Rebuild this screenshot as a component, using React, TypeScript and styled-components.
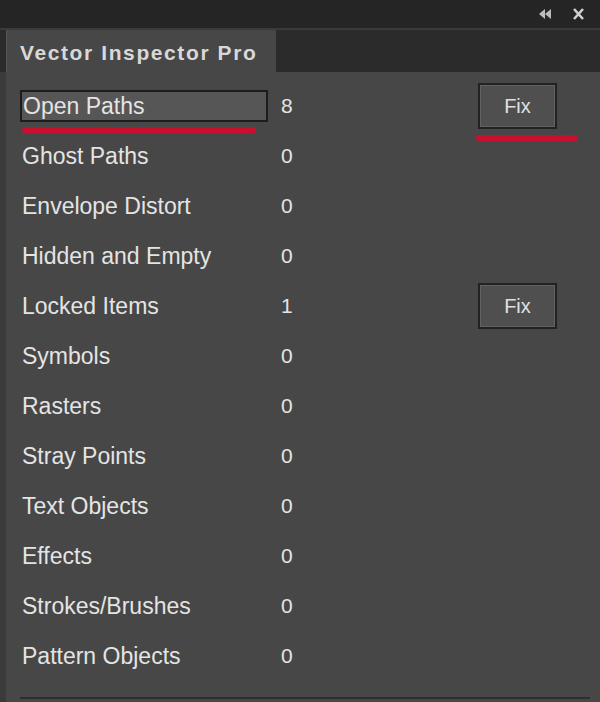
import React from "react";
import styled, { createGlobalStyle } from "styled-components";

const Global = createGlobalStyle`
  html, body { margin: 0; padding: 0; background: #474747; }
  body { font-family: "Liberation Sans", Arial, sans-serif; }
`;

const Panel = styled.div`
  width: 600px;
  height: 702px;
  background: #474747;
  display: flex;
  flex-direction: column;
  overflow: hidden;
`;

const TitleBar = styled.div`
  height: 28px;
  background: #252525;
  border-bottom: 2px solid #3a3a3a;
  display: flex;
  align-items: center;
  justify-content: flex-end;
  gap: 20px;
  padding-right: 15px;
`;

const TabStrip = styled.div`
  height: 42px;
  background: #2b2b2b;
  display: flex;
  padding-left: 6px;
`;

const Tab = styled.div`
  width: 270px;
  background: #474747;
  border-left: 1px solid #555;
  color: #d8d8d8;
  font-weight: bold;
  font-size: 21px;
  letter-spacing: 1.6px;
  display: flex;
  align-items: center;
  padding: 3px 0 0 13px;
  box-sizing: border-box;
`;

const Body = styled.div`
  flex: 1;
  display: flex;
  flex-direction: column;
  border-left: 6px solid #3b3b3b;
  padding: 9px 10px 0 14px;
`;

const List = styled.div`
  display: grid;
  grid-template-columns: 261px 197px 79px;
  grid-auto-rows: 50px;
`;

const Label = styled.div<{ $active?: boolean }>`
  position: relative;
  align-self: center;
  width: 248px;
  height: ${(p) => (p.$active ? "32px" : "auto")};
  box-sizing: border-box;
  display: flex;
  align-items: center;
  padding-left: ${(p) => (p.$active ? "1px" : "2px")};
  background: ${(p) => (p.$active ? "#565656" : "transparent")};
  border: ${(p) => (p.$active ? "2px solid #1c1c1c" : "none")};
  color: #e4e4e4;
  font-size: 23px;
`;

const Count = styled.div`
  align-self: center;
  color: #e4e4e4;
  font-size: 21px;
`;

const Cell = styled.div`
  position: relative;
  display: flex;
  align-items: center;
`;

const FixButton = styled.button`
  width: 79px;
  height: 46px;
  background: #4f4f4f;
  border: 2px solid #222;
  box-shadow: inset 0 0 0 1px #626262;
  color: #e0e0e0;
  font-family: "Liberation Sans", Arial, sans-serif;
  font-size: 20px;
  padding: 0;
`;

const RedMark = styled.span<{ $w: number; $l: number; $t: number }>`
  position: absolute;
  left: ${(p) => p.$l}px;
  top: ${(p) => p.$t}px;
  width: ${(p) => p.$w}px;
  height: 6px;
  border-radius: 3px;
  background: #c8102e;
`;

const Footer = styled.div`
  margin-top: 16px;
  height: 2px;
  background: #2e2e2e;
`;

const Icon = styled.svg`
  display: block;
`;

const rows: [string, number, boolean][] = [
  ["Open Paths", 8, true],
  ["Ghost Paths", 0, false],
  ["Envelope Distort", 0, false],
  ["Hidden and Empty", 0, false],
  ["Locked Items", 1, true],
  ["Symbols", 0, false],
  ["Rasters", 0, false],
  ["Stray Points", 0, false],
  ["Text Objects", 0, false],
  ["Effects", 0, false],
  ["Strokes/Brushes", 0, false],
  ["Pattern Objects", 0, false],
];

export default function App() {
  return (
    <>
      <Global />
      <Panel>
        <TitleBar>
          <Icon width="14" height="10" viewBox="0 0 14 10">
            <polygon points="7,0 7,10 1,5" fill="#bdbdbd" />
            <polygon points="13,0 13,10 7,5" fill="#bdbdbd" />
          </Icon>
          <Icon width="13" height="12" viewBox="0 0 13 12">
            <path d="M2 1 L11 11 M11 1 L2 11" stroke="#d0d0d0" strokeWidth="2.6" />
          </Icon>
        </TitleBar>
        <TabStrip>
          <Tab>Vector Inspector Pro</Tab>
        </TabStrip>
        <Body>
          <List>
            {rows.map(([name, n, fix], i) => (
              <React.Fragment key={name}>
                <Label $active={i === 0}>
                  {name}
                  {i === 0 && <RedMark $l={0} $t={35} $w={234} />}
                </Label>
                <Count>{n}</Count>
                <Cell>
                  {fix && <FixButton>Fix</FixButton>}
                  {i === 0 && <RedMark $l={-2} $t={54} $w={102} />}
                </Cell>
              </React.Fragment>
            ))}
          </List>
          <Footer />
        </Body>
      </Panel>
    </>
  );
}
